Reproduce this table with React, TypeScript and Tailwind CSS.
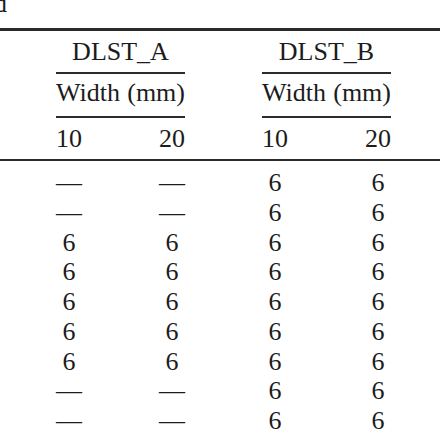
const cols = 'grid grid-cols-[56px_26px_77px_26px_77px_26px_77px_26px_1fr]';

type Cell = string;

const rows: Array<[Cell, Cell, Cell, Cell]> = [
  ['—', '—', '6', '6'],
  ['—', '—', '6', '6'],
  ['6', '6', '6', '6'],
  ['6', '6', '6', '6'],
  ['6', '6', '6', '6'],
  ['6', '6', '6', '6'],
  ['6', '6', '6', '6'],
  ['—', '—', '6', '6'],
  ['—', '—', '6', '6'],
];

export default function App() {
  return (
    <div className="w-[440px] h-[440px] overflow-hidden bg-white text-[#1c1c1c] text-[26px] font-['Liberation_Serif','Times_New_Roman',serif]">
      <div className="-mt-[9px] -ml-[6px] leading-[26px]">d</div>

      <div className="mt-[11px] h-[3px] bg-[#2b2b2b]" />

      {/* group headers */}
      <div className={`${cols} mt-[6px] h-[30px] leading-[30px]`}>
        <div className="col-start-2 col-span-3 text-center">DLST_A</div>
        <div className="col-start-6 col-span-3 text-center">DLST_B</div>
      </div>
      <div className={`${cols} mt-[5px]`}>
        <div className="col-start-2 col-span-3 h-[2px] bg-[#2b2b2b]" />
        <div className="col-start-6 col-span-3 h-[2px] bg-[#2b2b2b]" />
      </div>

      <div className={`${cols} mt-[4px] h-[30px] leading-[30px]`}>
        <div className="col-start-2 col-span-3 flex justify-between">
          <span>Width</span>
          <span>(mm)</span>
        </div>
        <div className="col-start-6 col-span-3 flex justify-between">
          <span>Width</span>
          <span>(mm)</span>
        </div>
      </div>
      <div className={`${cols} mt-[8px]`}>
        <div className="col-start-2 col-span-3 h-[2px] bg-[#2b2b2b]" />
        <div className="col-start-6 col-span-3 h-[2px] bg-[#2b2b2b]" />
      </div>

      <div className={`${cols} mt-[6px] h-[30px] leading-[30px]`}>
        <div className="col-start-2 text-center">10</div>
        <div className="col-start-4 text-center">20</div>
        <div className="col-start-6 text-center">10</div>
        <div className="col-start-8 text-center">20</div>
      </div>

      <div className="mt-[5px] h-[2px] bg-[#2b2b2b]" />

      <div className="mt-[7px]">
        {rows.map((r, i) => (
          <div key={i} className={`${cols} h-[29.75px] leading-[29.75px]`}>
            <div className="col-start-2 text-center">{r[0]}</div>
            <div className="col-start-4 text-center">{r[1]}</div>
            <div className="col-start-6 text-center">{r[2]}</div>
            <div className="col-start-8 text-center">{r[3]}</div>
          </div>
        ))}
      </div>
    </div>
  );
}
